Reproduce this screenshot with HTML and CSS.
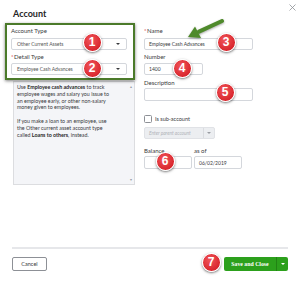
FILE: index.html
```html
<!DOCTYPE html>
<html lang="en">
<head>
<meta charset="utf-8">
<title>Account</title>
<link rel="stylesheet" href="styles.css">
</head>
<body>
<div class="dialog">
  <header class="head">
    <h1 class="title">Account</h1>
    <svg class="close" viewBox="0 0 7 7" width="7" height="7"><path d="M0.5 0.5L6.5 6.5M6.5 0.5L0.5 6.5" stroke="#8d9096" stroke-width="0.8" fill="none"/></svg>
  </header>
  <div class="main">
    <div class="left">
      <div class="highlight">
        <span class="lbl">Account Type</span>
        <div class="select first"><span>Other Current Assets</span><span class="caret"></span></div>
        <span class="lbl next"><span class="req">*</span>Detail Type</span>
        <div class="select second"><span>Employee Cash Advances</span><span class="caret"></span></div>
      </div>
      <div class="desc">
        <p>Use <b>Employee cash advances</b> to track<br>employee wages and salary you issue to<br>an employee early, or other non-salary<br>money given to employees.</p>
        <p>If you make a loan to an employee, use<br>the Other current asset account type<br>called <b>Loans to others</b>, instead.</p>
        <span class="scroll up">&#9652;</span>
        <span class="scroll down">&#9662;</span>
      </div>
    </div>
    <div class="right">
      <span class="lbl"><span class="req">*</span>Name</span>
      <div class="input w-full name">Employee Cash Advances</div>
      <span class="lbl num-lbl">Number</span>
      <div class="input w-num num">1400</div>
      <span class="lbl desc-lbl">Description</span>
      <div class="input w-full tall"></div>
      <div class="check-row"><span class="checkbox"></span><span>Is sub-account</span></div>
      <div class="parent"><span class="ph">Enter parent account</span><span class="pcaret"><span class="caret light"></span></span></div>
      <div class="bal-row">
        <div class="bal-col"><span class="lbl">Balance</span><div class="input tall w-bal"></div></div>
        <div class="bal-col"><span class="lbl">as of</span><div class="input tall w-bal">06/02/2019</div></div>
      </div>
    </div>
  </div>
  <footer class="foot">
    <button class="cancel">Cancel</button>
    <div class="save"><span class="save-txt">Save and Close</span><span class="save-dd"><span class="caret white"></span></span></div>
  </footer>

  <svg class="arrow" viewBox="0 0 42 24" width="42" height="24">
    <path d="M37 4L14 14.6" stroke="#4f8a2b" stroke-width="4" stroke-linecap="round" fill="none"/>
    <path d="M3 20L10 9.4L16 20.9Z" fill="#4f8a2b"/>
  </svg>
  <span class="badge b1">1</span>
  <span class="badge b2">2</span>
  <span class="badge b3">3</span>
  <span class="badge b4">4</span>
  <span class="badge b5">5</span>
  <span class="badge b6">6</span>
  <span class="badge b7">7</span>
</div>
</body>
</html>
```
FILE: styles.css
```css
* { box-sizing: border-box; margin: 0; padding: 0; }
body {
  width: 300px;
  height: 283px;
  overflow: hidden;
  background: #fff;
  font-family: "Lato", "Open Sans", sans-serif;
  color: #393a3d;
}
.dialog {
  position: relative;
  height: 283px;
  display: flex;
  flex-direction: column;
}
.head {
  height: 23px;
  display: flex;
  justify-content: space-between;
  align-items: flex-start;
  padding: 8px 4px 0 13px;
}
.title {
  font-size: 9px;
  line-height: 12px;
  font-weight: 700;
  color: #262626;
}
.close { margin-top: -4px; }

.main {
  flex: 1;
  display: flex;
  align-items: flex-start;
  gap: 9px;
  padding-left: 13px;
}
.left {
  width: 122px;
  display: flex;
  flex-direction: column;
}
.highlight {
  position: relative;
  z-index: 1;
  margin-left: -8px;
  width: 130px;
  display: flex;
  flex-direction: column;
  border: 2px solid #4b7a2a;
  padding: 2px 6px 3px 4px;
  background: #fff;
  box-shadow: 0 1px 3px rgba(0,0,0,.5);
}
.lbl {
  display: block;
  font-size: 6px;
  line-height: 8px;
  color: #393a3d;
  white-space: nowrap;
}
.req { color: #d52b1e; margin-right: 0.5px; }
.lbl.next { margin-top: 3px; }
.select {
  height: 12px;
  border: 1px solid #d4d7dc;
  border-radius: 2px;
  display: flex;
  align-items: center;
  justify-content: space-between;
  padding: 0 6px 0 5px;
  font-size: 5px;
  color: #555;
}
.select.first { margin-top: 3px; }
.select.second { margin-top: 2px; }
.caret {
  width: 0;
  height: 0;
  border-left: 2px solid transparent;
  border-right: 2px solid transparent;
  border-top: 2.5px solid #393a3d;
}
.caret.light { border-top-color: #9a9da3; }
.caret.white { border-top-color: #fff; }

.desc {
  position: relative;
  margin-top: 1px;
  height: 104px;
  background: #f4f5f8;
  border: 1px solid #dcdde0;
  padding: 2px 8px 0 3px;
  font-size: 5.3px;
  line-height: 6.8px;
  color: #393a3d;
  white-space: nowrap;
}
.desc p + p { margin-top: 6.8px; }
.desc b { font-weight: 700; color: #262626; }
.scroll {
  position: absolute;
  right: 2px;
  font-size: 4px;
  line-height: 4px;
  color: #9a9da3;
}
.scroll.up { top: 3px; }
.scroll.down { bottom: 2px; }

.right {
  width: 112px;
  padding-top: 4px;
  display: flex;
  flex-direction: column;
}
.input {
  height: 12px;
  border: 1px solid #d4d7dc;
  border-radius: 2px;
  background: #fff;
  display: flex;
  align-items: center;
  padding: 0 4px;
  font-size: 5px;
  color: #393a3d;
  white-space: nowrap;
}
.input.tall { height: 13px; }
.w-full { width: 109px; }
.w-num { width: 59px; }
.w-bal { width: 48px; }
.name { margin-top: 3px; }
.num-lbl { margin-top: 3px; }
.num { margin-top: 2px; }
.desc-lbl { margin-top: 4px; }
.desc-lbl + .input { margin-top: 1px; }
.check-row {
  margin-top: 14px;
  height: 8px;
  display: flex;
  align-items: center;
  gap: 3px;
  font-size: 5.5px;
  color: #393a3d;
}
.checkbox {
  width: 8px;
  height: 8px;
  border: 1px solid #8d9096;
  border-radius: 1.5px;
  background: #fff;
}
.parent {
  margin-top: 4px;
  width: 71px;
  height: 12px;
  display: flex;
  align-items: stretch;
  background: #eceef1;
  border: 1px solid #e0e2e6;
  border-radius: 2px;
}
.ph {
  flex: 1;
  display: flex;
  align-items: center;
  padding-left: 4px;
  font-size: 4.8px;
  font-style: italic;
  color: #b0b3b8;
}
.pcaret {
  width: 11px;
  display: flex;
  align-items: center;
  justify-content: center;
  border-left: 1px solid #dadce0;
}
.bal-row {
  margin-top: 8px;
  display: flex;
  gap: 2px;
}
.bal-col {
  display: flex;
  flex-direction: column;
  gap: 1px;
}

.foot {
  margin: 0 12px;
  border-top: 2px solid #e6e7ea;
  padding: 8px 0 12px;
  display: flex;
  justify-content: space-between;
  align-items: center;
}
.cancel {
  width: 35px;
  height: 14px;
  border: 1px solid #8d9096;
  border-radius: 2px;
  background: #fff;
  font-family: "Lato", "Open Sans", sans-serif;
  font-size: 5.5px;
  color: #393a3d;
}
.save {
  width: 64px;
  height: 14px;
  display: flex;
  background: #2ca01c;
  border-radius: 2px;
  color: #fff;
}
.save-txt {
  flex: 1;
  display: flex;
  align-items: center;
  justify-content: center;
  font-family: "Liberation Serif", serif;
  font-weight: 700;
  font-size: 5.8px;
}
.save-dd {
  width: 12px;
  display: flex;
  align-items: center;
  justify-content: center;
  border-left: 1px solid #228314;
}

.arrow {
  position: absolute;
  left: 185px;
  top: 17px;
  z-index: 3;
  filter: drop-shadow(0 1px 1px rgba(0,0,0,.35));
}
.badge {
  position: absolute;
  z-index: 4;
  width: 19px;
  height: 19px;
  margin: -9.5px 0 0 -9.5px;
  border-radius: 50%;
  border: 1.3px solid #fff;
  background: radial-gradient(circle at 40% 35%, #f0555a, #d9272e 70%);
  box-shadow: 0 1px 2.5px rgba(0,0,0,.55);
  color: #fff;
  font-family: "Liberation Sans", sans-serif;
  font-weight: 700;
  font-size: 12px;
  line-height: 16.5px;
  text-align: center;
}
.b1 { left: 92px; top: 42px; }
.b2 { left: 92px; top: 68px; }
.b3 { left: 226px; top: 42px; }
.b4 { left: 182px; top: 68px; }
.b5 { left: 225px; top: 92px; }
.b6 { left: 165px; top: 161px; }
.b7 { left: 211px; top: 262px; }
```
